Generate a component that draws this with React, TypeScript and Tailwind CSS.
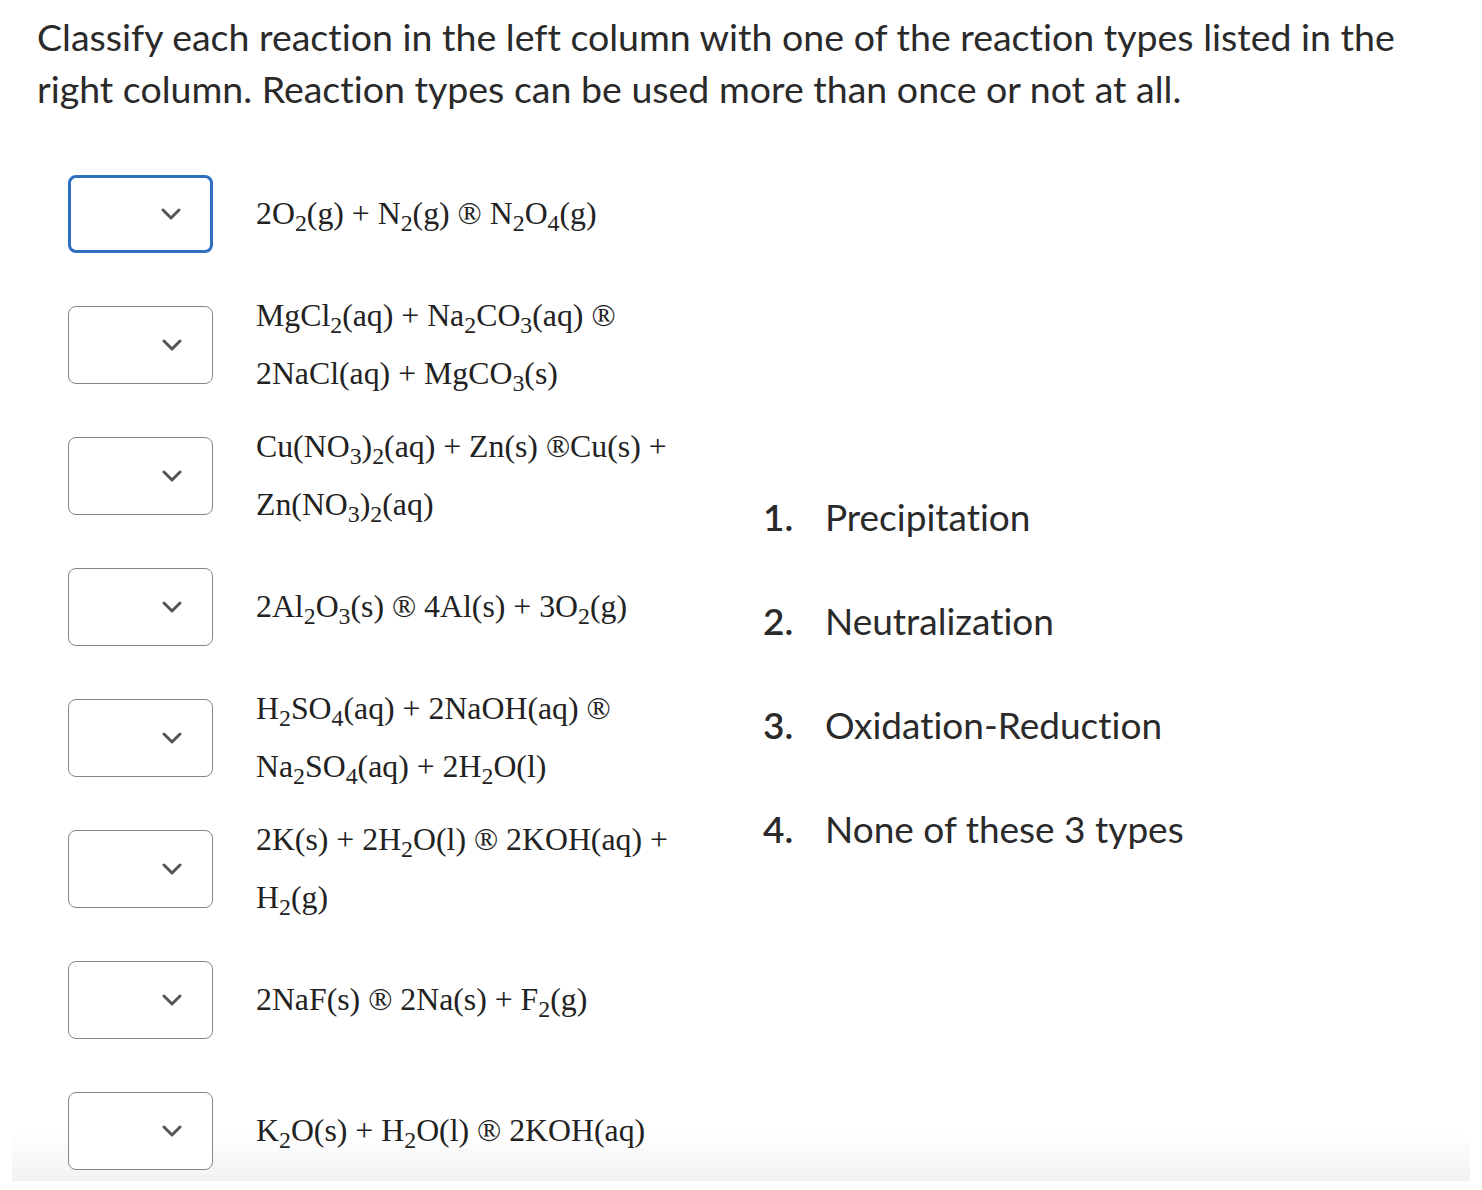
import type { ReactNode } from "react";

const S = ({ children }: { children: ReactNode }) => (
  <sub className="text-[0.75em] relative top-[0.3em] align-baseline">{children}</sub>
);

interface Reaction {
  id: number;
  lines: ReactNode[];
}

const reactions: Reaction[] = [
  {
    id: 1,
    lines: [
      <>
        2O<S>2</S>(g) + N<S>2</S>(g) ® N<S>2</S>O<S>4</S>(g)
      </>,
    ],
  },
  {
    id: 2,
    lines: [
      <>
        MgCl<S>2</S>(aq) + Na<S>2</S>CO<S>3</S>(aq) ®
      </>,
      <>
        2NaCl(aq) + MgCO<S>3</S>(s)
      </>,
    ],
  },
  {
    id: 3,
    lines: [
      <>
        Cu(NO<S>3</S>)<S>2</S>(aq) + Zn(s) ®Cu(s) +
      </>,
      <>
        Zn(NO<S>3</S>)<S>2</S>(aq)
      </>,
    ],
  },
  {
    id: 4,
    lines: [
      <>
        2Al<S>2</S>O<S>3</S>(s) ® 4Al(s) + 3O<S>2</S>(g)
      </>,
    ],
  },
  {
    id: 5,
    lines: [
      <>
        H<S>2</S>SO<S>4</S>(aq) + 2NaOH(aq) ®
      </>,
      <>
        Na<S>2</S>SO<S>4</S>(aq) + 2H<S>2</S>O(l)
      </>,
    ],
  },
  {
    id: 6,
    lines: [
      <>
        2K(s) + 2H<S>2</S>O(l) ® 2KOH(aq) +
      </>,
      <>
        H<S>2</S>(g)
      </>,
    ],
  },
  {
    id: 7,
    lines: [
      <>
        2NaF(s) ® 2Na(s) + F<S>2</S>(g)
      </>,
    ],
  },
  {
    id: 8,
    lines: [
      <>
        K<S>2</S>O(s) + H<S>2</S>O(l) ® 2KOH(aq)
      </>,
    ],
  },
];

const types = ["Precipitation", "Neutralization", "Oxidation-Reduction", "None of these 3 types"];

function Chevron() {
  return (
    <svg width="20" height="12" viewBox="0 0 20 12" fill="none">
      <path d="M2 2l8 8 8-8" stroke="#555" strokeWidth="3" strokeLinecap="round" strokeLinejoin="round" />
    </svg>
  );
}

function Select({ focused }: { focused?: boolean }) {
  return (
    <div
      className={
        focused
          ? "w-[145px] h-[78px] shrink-0 rounded-[8px] border-[3px] border-[#2f6fc2] bg-white flex items-center justify-end pr-[29px]"
          : "w-[145px] h-[78px] shrink-0 rounded-[8px] border-[1.5px] border-[#868686] bg-white flex items-center justify-end pr-[30px]"
      }
    >
      <Chevron />
    </div>
  );
}

export default function App() {
  return (
    <div className="relative w-[1482px] h-[1190px] bg-white text-[#2a2a2a] overflow-hidden">
      <div className="absolute left-[12px] right-[12px] top-[1132px] h-[49px] bg-gradient-to-b from-white to-[#f2f2f2]" />
      <div className="relative">
        <p className="pl-[37px] pr-[40px] pt-[11px] font-['Lato',sans-serif] text-[37.5px] leading-[52px] [font-variant-ligatures:none]">
          Classify each reaction in the left column with one of the reaction types listed in the right column.
          Reaction types can be used more than once or not at all.
        </p>
        <div className="flex mt-[60px] pl-[68px]">
          <div className="flex flex-col gap-[53px] w-[695px]">
            {reactions.map((r, i) => (
              <div key={r.id} className="flex items-center h-[78px] gap-[43px]">
                <Select focused={i === 0} />
                <div className="font-['Liberation_Serif',serif] text-[31.8px] leading-[58px] text-[#222] whitespace-nowrap">
                  {r.lines.map((l, j) => (
                    <div key={j}>{l}</div>
                  ))}
                </div>
              </div>
            ))}
          </div>
          <ol className="flex flex-col justify-center gap-[52px] font-['Lato',sans-serif] text-[37px] leading-[52px] [font-variant-ligatures:none]">
            {types.map((t, i) => (
              <li key={t} className="flex">
                <span className="w-[62px] font-semibold">{i + 1}.</span>
                <span>{t}</span>
              </li>
            ))}
          </ol>
        </div>
      </div>
    </div>
  );
}
